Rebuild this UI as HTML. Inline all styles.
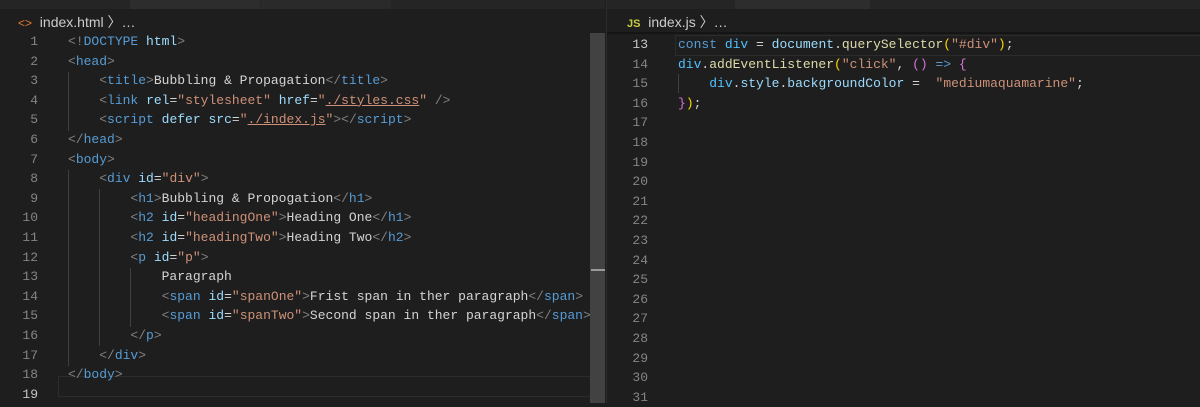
<!DOCTYPE html>
<html><head><style>
body{margin:0;width:1200px;height:403px;background:#1e1e1e;overflow:hidden;position:relative;font-family:"Liberation Mono",monospace;font-size:13px;}
.top{position:absolute;top:0;height:9px;background:#252526}
.seg{position:absolute;top:0;height:9px;background:#2d2d2d}
.bc{position:absolute;top:12px;font-family:"Liberation Sans",sans-serif;font-size:14px;color:#cccccc}
.ln{position:absolute;color:#858585;text-align:right;width:30px;line-height:19.6px;white-space:pre}
.code{position:absolute;color:#d4d4d4;line-height:19.6px;white-space:pre}
.g{color:#808080}.t{color:#569cd6}.a{color:#9cdcfe}.s{color:#ce9178}.v{color:#4fc1ff}.f{color:#dcdcaa}.y{color:#ffd700}.p{color:#da70d6}
.u{text-decoration:underline;text-decoration-color:#ce9178}
.ig{position:absolute;width:1px;background:#404040}
</style></head><body>
<div class="top" style="left:0;width:605px"></div>
<div class="seg" style="left:130px;width:130px"></div>
<div class="seg" style="left:261px;width:130px;background:#2a2a2a"></div>
<div class="top" style="left:607px;width:593px"></div>
<div class="seg" style="left:735px;width:135px"></div>
<div style="position:absolute;left:606px;top:0;width:1px;height:403px;background:#2b2b2b"></div>
<div class="bc" style="left:18px"><span style="color:#e37933;font-size:12px">&lt;&gt;</span>&nbsp; index.html 〉…</div>
<div class="bc" style="left:627px"><span style="color:#cbcb41;font-size:11px;font-weight:bold">JS</span>&nbsp; index.js 〉…</div>
<div style="position:absolute;left:607px;top:32px;width:593px;height:2px;background:#151515"></div>
<div style="position:absolute;left:58px;top:376px;width:532px;height:19px;border:1px solid #2c2c2c"></div>
<div style="position:absolute;left:675px;top:35px;width:525px;height:19px;border:1px solid #2c2c2c"></div>
<div class="ig" style="left:68px;top:72px;height:59px"></div>
<div class="ig" style="left:68px;top:170px;height:196px"></div>
<div class="ig" style="left:99px;top:189px;height:157px"></div>
<div class="ig" style="left:130px;top:268px;height:59px"></div>
<div class="ig" style="left:678px;top:74px;height:19px"></div>
<div class="ln" style="left:8px;top:32px">1
2
3
4
5
6
7
8
9
10
11
12
13
14
15
16
17
18
<span style="color:#c6c6c6">19</span></div>
<div class="code" style="left:68px;top:32px"><span class="g">&lt;!</span><span class="t">DOCTYPE</span> <span class="a">html</span><span class="g">&gt;</span>
<span class="g">&lt;</span><span class="t">head</span><span class="g">&gt;</span>
    <span class="g">&lt;</span><span class="t">title</span><span class="g">&gt;</span>Bubbling &amp; Propagation<span class="g">&lt;/</span><span class="t">title</span><span class="g">&gt;</span>
    <span class="g">&lt;</span><span class="t">link</span> <span class="a">rel</span>=<span class="s">"stylesheet"</span> <span class="a">href</span>=<span class="s">"<span class="u">./styles.css</span>"</span> <span class="g">/&gt;</span>
    <span class="g">&lt;</span><span class="t">script</span> <span class="a">defer</span> <span class="a">src</span>=<span class="s">"<span class="u">./index.js</span>"</span><span class="g">&gt;&lt;/</span><span class="t">script</span><span class="g">&gt;</span>
<span class="g">&lt;/</span><span class="t">head</span><span class="g">&gt;</span>
<span class="g">&lt;</span><span class="t">body</span><span class="g">&gt;</span>
    <span class="g">&lt;</span><span class="t">div</span> <span class="a">id</span>=<span class="s">"div"</span><span class="g">&gt;</span>
        <span class="g">&lt;</span><span class="t">h1</span><span class="g">&gt;</span>Bubbling &amp; Propogation<span class="g">&lt;/</span><span class="t">h1</span><span class="g">&gt;</span>
        <span class="g">&lt;</span><span class="t">h2</span> <span class="a">id</span>=<span class="s">"headingOne"</span><span class="g">&gt;</span>Heading One<span class="g">&lt;/</span><span class="t">h1</span><span class="g">&gt;</span>
        <span class="g">&lt;</span><span class="t">h2</span> <span class="a">id</span>=<span class="s">"headingTwo"</span><span class="g">&gt;</span>Heading Two<span class="g">&lt;/</span><span class="t">h2</span><span class="g">&gt;</span>
        <span class="g">&lt;</span><span class="t">p</span> <span class="a">id</span>=<span class="s">"p"</span><span class="g">&gt;</span>
            Paragraph
            <span class="g">&lt;</span><span class="t">span</span> <span class="a">id</span>=<span class="s">"spanOne"</span><span class="g">&gt;</span>Frist span in ther paragraph<span class="g">&lt;/</span><span class="t">span</span><span class="g">&gt;</span>
            <span class="g">&lt;</span><span class="t">span</span> <span class="a">id</span>=<span class="s">"spanTwo"</span><span class="g">&gt;</span>Second span in ther paragraph<span class="g">&lt;/</span><span class="t">span</span><span class="g">&gt;</span>
        <span class="g">&lt;/</span><span class="t">p</span><span class="g">&gt;</span>
    <span class="g">&lt;/</span><span class="t">div</span><span class="g">&gt;</span>
<span class="g">&lt;/</span><span class="t">body</span><span class="g">&gt;</span>
</div>
<div style="position:absolute;left:590px;top:33px;width:15px;height:370px;background:#424242"></div>
<div style="position:absolute;left:591px;top:269px;width:14px;height:2px;background:#9a9a9a"></div>
<div class="ln" style="left:618px;top:35px"><span style="color:#c6c6c6">13</span>
14
15
16
17
18
19
20
21
22
23
24
25
26
27
28
29
30
31</div>
<div class="code" style="left:678px;top:35px"><span class="t">const</span> <span class="v">div</span> = <span class="a">document</span>.<span class="f">querySelector</span><span class="y">(</span><span class="s">"#div"</span><span class="y">)</span>;
<span class="v">div</span>.<span class="f">addEventListener</span><span class="y">(</span><span class="s">"click"</span>, <span class="p">()</span> <span class="t">=&gt;</span> <span class="p">{</span>
    <span class="v">div</span>.<span class="a">style</span>.<span class="a">backgroundColor</span> =  <span class="s">"mediumaquamarine"</span>;
<span class="p">}</span><span class="y">)</span>;</div>
</body></html>
